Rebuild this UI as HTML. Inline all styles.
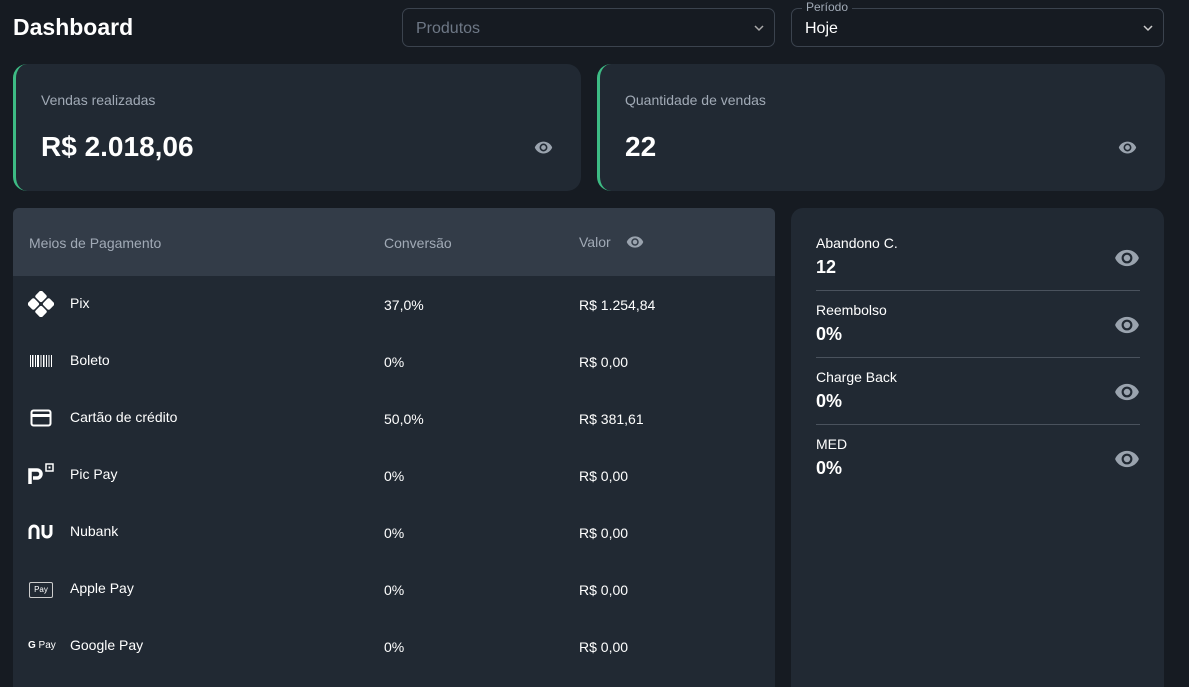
<!DOCTYPE html><html><head><style>
html{overflow:hidden;height:687px}
body{margin:0;width:1189px;height:687px;background:#161b22;font-family:"Liberation Sans",sans-serif;overflow:hidden;position:relative;color:#fff}
.a{position:absolute}
h1{position:absolute;left:13px;top:14px;margin:0;font-size:23px;font-weight:bold}
.sel{position:absolute;top:8px;height:39px;border:1px solid #3b434e;border-radius:7px;box-sizing:border-box;font-size:16px;padding:11px 13px}
.card{position:absolute;top:64px;height:127px;background:#212933;border-radius:14px;border-left:3px solid #3dbb84;box-sizing:border-box}
.card .l{position:absolute;left:25px;top:28px;font-size:14px;color:#a1aab6}
.card .v{position:absolute;left:25px;top:67px;font-size:28px;font-weight:bold}
.eye{position:absolute}
.tbl{position:absolute;left:13px;top:208px;width:762px;height:479px;background:#212933;border-radius:6px 6px 0 0;overflow:hidden}
.th{height:68px;background:#333c48;position:relative;font-size:14px;color:#a1aab6}
.th span,.row span{position:absolute}
.row{height:57px;position:relative;font-size:14px}
.side{position:absolute;left:791px;top:208px;width:373px;height:479px;background:#212933;border-radius:12px 12px 0 0}
.it{position:absolute;left:25px;width:324px;height:67px;border-bottom:1px solid #4a525d;box-sizing:border-box}
.it .t{position:absolute;top:0;font-size:14px}
.it .n{position:absolute;top:22px;font-size:18px;font-weight:bold}
</style></head><body>
<svg width="0" height="0" style="position:absolute"><defs><symbol id="e" viewBox="0 0 24 24"><path fill="#9aa3ae" d="M12 4.5C7 4.5 2.7 7.6 1 12c1.7 4.4 6 7.5 11 7.5s9.3-3.1 11-7.5c-1.7-4.4-6-7.5-11-7.5zM12 17a5 5 0 110-10 5 5 0 010 10zm0-8a3 3 0 100 6 3 3 0 000-6z"/></symbol></defs></svg>
<h1>Dashboard</h1>
<div class="sel" style="left:402px;width:373px;color:#6e7886">Produtos<svg class="a" style="right:10px;top:16px" width="10" height="7"><path d="M1 1l4 4 4-4" stroke="#aaa" fill="none" stroke-width="1.5"/></svg></div>
<div class="sel" style="left:791px;width:373px;color:#fff">Hoje<svg class="a" style="right:10px;top:16px" width="10" height="7"><path d="M1 1l4 4 4-4" stroke="#ccc" fill="none" stroke-width="1.5"/></svg><span class="a" style="left:10px;top:-9px;font-size:12px;color:#a1aab6;background:#161b22;padding:0 4px">Período</span></div>
<div class="card" style="left:13px;width:568px"><div class="l">Vendas realizadas</div><div class="v">R$ 2.018,06</div><svg class="eye" style="left:518px;top:74px" width="19" height="19"><use href="#e"/></svg></div>
<div class="card" style="left:597px;width:568px"><div class="l">Quantidade de vendas</div><div class="v">22</div><svg class="eye" style="left:518px;top:74px" width="19" height="19"><use href="#e"/></svg></div>
<div class="tbl">
<div class="th"><span style="left:16px;top:27px">Meios de Pagamento</span><span style="left:371px;top:27px">Conversão</span><span style="left:566px;top:26px">Valor</span><svg class="a" style="left:613px;top:25px" width="18" height="18"><use href="#e"/></svg></div>
<div class="row"><svg class="a" style="left:15px;top:15px" width="26" height="26" viewBox="0 0 26 26"><g fill="#fff" transform="rotate(45 13 13)"><rect x="3" y="3" width="9.2" height="9.2" rx="2"/><rect x="13.8" y="3" width="9.2" height="9.2" rx="2"/><rect x="3" y="13.8" width="9.2" height="9.2" rx="2"/><rect x="13.8" y="13.8" width="9.2" height="9.2" rx="2"/></g></svg><span style="left:57px;top:19px">Pix</span><span style="left:371px;top:21px">37,0%</span><span style="left:566px;top:21px">R$ 1.254,84</span></div>
<div class="row"><svg class="a" style="left:16px;top:20px" width="24" height="16"><g fill="#fff"><rect x="1" y="2" width="1" height="12"/><rect x="3" y="2" width="1.5" height="12"/><rect x="6" y="2" width="1" height="12"/><rect x="8" y="2" width="2" height="12"/><rect x="11.5" y="2" width="1" height="12"/><rect x="14" y="2" width="1.5" height="12"/><rect x="17" y="2" width="1" height="12"/><rect x="19.5" y="2" width="1" height="12"/><rect x="22" y="2" width="1" height="12"/></g></svg><span style="left:57px;top:19px">Boleto</span><span style="left:371px;top:21px">0%</span><span style="left:566px;top:21px">R$ 0,00</span></div>
<div class="row"><svg class="a" style="left:17px;top:18px" width="22" height="20"><rect x="1.5" y="2.5" width="19" height="15" rx="2" stroke="#fff" stroke-width="2" fill="none"/><rect x="2" y="6" width="18" height="3" fill="#fff"/></svg><span style="left:57px;top:19px">Cartão de crédito</span><span style="left:371px;top:21px">50,0%</span><span style="left:566px;top:21px">R$ 381,61</span></div>
<div class="row"><svg class="a" style="left:15px;top:15px" width="28" height="24"><path d="M2 22V8h7a4 4 0 010 8H5" stroke="#fff" stroke-width="3.5" fill="none"/><rect x="18" y="2" width="7" height="7" stroke="#fff" stroke-width="1.5" fill="none"/><rect x="20.5" y="4.5" width="2" height="2" fill="#fff"/></svg><span style="left:57px;top:19px">Pic Pay</span><span style="left:371px;top:21px">0%</span><span style="left:566px;top:21px">R$ 0,00</span></div>
<div class="row"><svg class="a" style="left:15px;top:20px" width="28" height="16"><path d="M2 15V6a4 4 0 018 0v9M15 1v8a4 4 0 008 0V1" stroke="#fff" stroke-width="3" fill="none"/></svg><span style="left:57px;top:19px">Nubank</span><span style="left:371px;top:21px">0%</span><span style="left:566px;top:21px">R$ 0,00</span></div>
<div class="row"><div class="a" style="left:16px;top:21px;width:22px;height:14px;border:1px solid #ccc;border-radius:2px;font-size:8px;line-height:14px;text-align:center;color:#fff">Pay</div><span style="left:57px;top:19px">Apple Pay</span><span style="left:371px;top:21px">0%</span><span style="left:566px;top:21px">R$ 0,00</span></div>
<div class="row"><span style="left:15px;top:22px;font-size:10px"><b>G</b> Pay</span><span style="left:57px;top:19px">Google Pay</span><span style="left:371px;top:21px">0%</span><span style="left:566px;top:21px">R$ 0,00</span></div>
</div>
<div class="side">
<div class="it" style="top:27px;height:56px"><div class="t">Abandono C.</div><div class="n">12</div><svg class="a" style="right:0;top:10px" width="26" height="26"><use href="#e"/></svg></div>
<div class="it" style="top:94px;height:56px"><div class="t">Reembolso</div><div class="n">0%</div><svg class="a" style="right:0;top:10px" width="26" height="26"><use href="#e"/></svg></div>
<div class="it" style="top:161px;height:56px"><div class="t">Charge Back</div><div class="n">0%</div><svg class="a" style="right:0;top:10px" width="26" height="26"><use href="#e"/></svg></div>
<div class="it" style="top:228px;height:56px;border:0"><div class="t">MED</div><div class="n">0%</div><svg class="a" style="right:0;top:10px" width="26" height="26"><use href="#e"/></svg></div>
</div>
</body></html>
